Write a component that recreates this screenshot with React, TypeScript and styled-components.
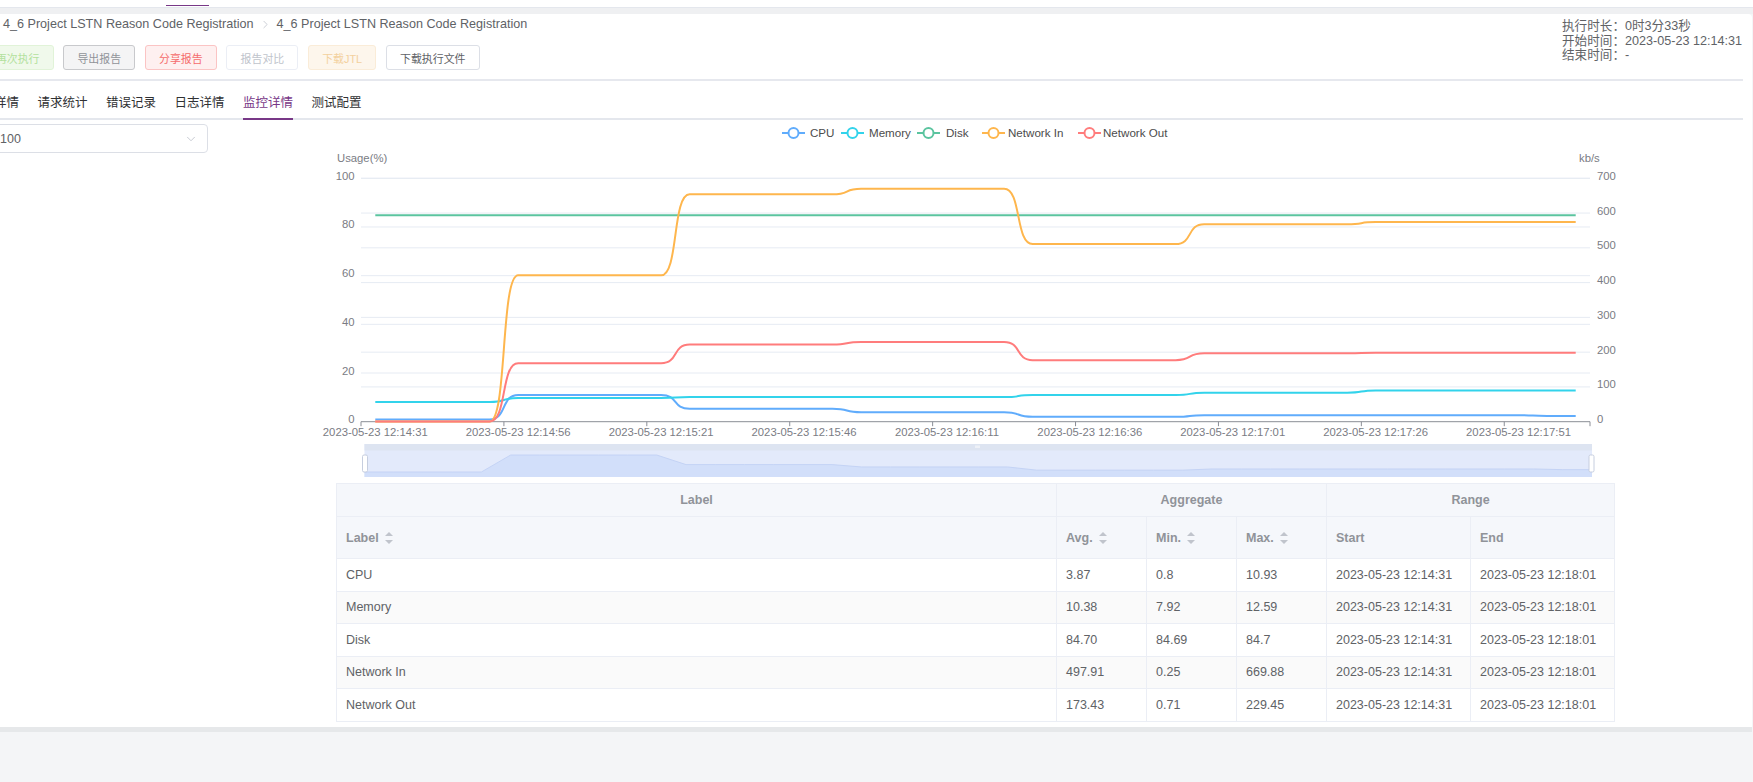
import React from 'react';
import styled, { createGlobalStyle } from 'styled-components';
import { ChevronDown, ChevronRight } from 'lucide-react';

const GlobalStyle = createGlobalStyle`
    html, body {
        margin: 0;
        padding: 0;
        height: 782px;
        overflow: hidden;
        background: #f4f5f7;
        font-family: "Liberation Sans", "Noto Sans CJK SC", sans-serif;
        color: #606266;
    }
`;

// chart geometry, in page pixels
const LEFT = 361;
const RIGHT = 1590;
const TOP = 178.3;
const BOTTOM = 421.7;
const COUNT = 43;
const BAND = (RIGHT - LEFT) / COUNT;
const pointX = (i: number) => LEFT + BAND / 2 + BAND * i;
const percentY = (v: number) => BOTTOM - (v / 100) * (BOTTOM - TOP);
const rateY = (v: number) => BOTTOM - (v / 700) * (BOTTOM - TOP);

// [first index, value] - the value holds until the next entry
const expand = (steps: number[][]) => {
    const out: number[] = [];
    for (let i = 0; i < COUNT; i++) {
        let v = steps[0][1];
        for (const s of steps) if (i >= s[0]) v = s[1];
        out.push(v);
    }
    return out;
};

const cpu = expand([[0, 0.9], [5, 11], [11, 5.3], [17, 3.9], [23, 2], [29, 2.7], [41, 2.3]]);
const memory = expand([[0, 8.1], [5, 9.7], [11, 10.1], [23, 10.95], [29, 11.9], [35, 12.85]]);
const disk = expand([[0, 84.8]]);
const netIn = expand([[0, 0.25], [5, 421], [11, 654], [17, 669.88], [23, 511], [29, 568], [35, 574]]);
const netOut = expand([[0, 0.71], [5, 168], [11, 222], [17, 229.45], [23, 177], [29, 197], [35, 198.5]]);

const smoothPath = (values: number[], toY: (v: number) => number) => {
    let d = `M${pointX(0)} ${toY(values[0])}`;
    for (let i = 1; i < values.length; i++) {
        const x0 = pointX(i - 1);
        const x1 = pointX(i);
        const h = (x1 - x0) * 0.62;
        d += ` C${x0 + h} ${toY(values[i - 1])} ${x1 - h} ${toY(values[i])} ${x1} ${toY(values[i])}`;
    }
    return d;
};

const SERIES = [
    { name: 'CPU', color: '#60acfc', values: cpu, toY: percentY, lx: 782, tx: 810 },
    { name: 'Memory', color: '#32d3eb', values: memory, toY: percentY, lx: 841, tx: 869 },
    { name: 'Disk', color: '#5bc49f', values: disk, toY: percentY, lx: 917, tx: 946 },
    { name: 'Network In', color: '#feb64d', values: netIn, toY: rateY, lx: 982, tx: 1008 },
    { name: 'Network Out', color: '#ff7c7c', values: netOut, toY: rateY, lx: 1078, tx: 1103 },
];

const X_LABELS = [
    '2023-05-23 12:14:31', '2023-05-23 12:14:56', '2023-05-23 12:15:21',
    '2023-05-23 12:15:46', '2023-05-23 12:16:11', '2023-05-23 12:16:36',
    '2023-05-23 12:17:01', '2023-05-23 12:17:26', '2023-05-23 12:17:51',
];

const SLIDER_LEFT = 364.5;
const SLIDER_RIGHT = 1592;
const sliderX = (i: number) => SLIDER_LEFT + ((SLIDER_RIGHT - SLIDER_LEFT) * i) / (COUNT - 1);
const sliderY = (v: number) => 472 - (v - 0.9) * 1.68;
const sliderLine = cpu.map((v, i) => `${sliderX(i)},${sliderY(v)}`).join(' ');

const BUTTONS = [
    { label: '再次执行', kind: 'success' },
    { label: '导出报告', kind: 'muted' },
    { label: '分享报告', kind: 'danger' },
    { label: '报告对比', kind: 'plain' },
    { label: '下载JTL', kind: 'warning' },
    { label: '下载执行文件', kind: 'default' },
];

const TABS = ['测试详情', '请求统计', '错误记录', '日志详情', '监控详情', '测试配置'];

const ROWS = [
    ['CPU', '3.87', '0.8', '10.93'],
    ['Memory', '10.38', '7.92', '12.59'],
    ['Disk', '84.70', '84.69', '84.7'],
    ['Network In', '497.91', '0.25', '669.88'],
    ['Network Out', '173.43', '0.71', '229.45'],
];

function MonitorChart() {
    const gridRight = [0, 100, 200, 300, 400, 500, 600, 700];
    const gridLeft = [0, 20, 40, 60, 80, 100];
    return (
        <ChartSvg viewBox="208 120 1545 364">
            {SERIES.map((s) => (
                <g key={s.name}>
                    <line x1={s.lx} x2={s.lx + 23} y1={133} y2={133} stroke={s.color} strokeWidth={2} />
                    <circle cx={s.lx + 11.5} cy={133} r={5} fill="#fff" stroke={s.color} strokeWidth={2} />
                    <LegendText x={s.tx} y={137}>{s.name}</LegendText>
                </g>
            ))}

            <AxisText x={337} y={161.5}>Usage(%)</AxisText>
            <AxisText x={1579} y={161.5}>kb/s</AxisText>

            {gridLeft.slice(1).map((v) => (
                <line key={v} x1={LEFT} x2={RIGHT} y1={percentY(v)} y2={percentY(v)} stroke="#e6ebf3" strokeWidth={1} />
            ))}
            {gridRight.slice(1).map((v) => (
                <line key={v} x1={LEFT} x2={RIGHT} y1={rateY(v)} y2={rateY(v)} stroke="#e6ebf3" strokeWidth={1} />
            ))}
            {gridLeft.map((v) => (
                <AxisText key={v} x={354.5} y={percentY(v) + 1.5} textAnchor="end">{v}</AxisText>
            ))}
            {gridRight.map((v) => (
                <AxisText key={v} x={1597} y={rateY(v) + 1.5}>{v}</AxisText>
            ))}

            <line x1={LEFT} x2={RIGHT} y1={BOTTOM} y2={BOTTOM} stroke="#8b8e96" strokeWidth={1} />
            {Array.from({ length: 10 }).map((_, i) => {
                const x = i === 9 ? RIGHT : LEFT + BAND * 5 * i;
                return <line key={i} x1={x} x2={x} y1={BOTTOM} y2={BOTTOM + 4.5} stroke="#8b8e96" strokeWidth={1} />;
            })}
            {X_LABELS.map((t, i) => (
                <AxisText key={t} x={pointX(5 * i)} y={435.5} textAnchor="middle">{t}</AxisText>
            ))}

            {SERIES.map((s) => (
                <path key={s.name} d={smoothPath(s.values, s.toY)} fill="none" stroke={s.color} strokeWidth={2} />
            ))}

            <rect x={SLIDER_LEFT} y={444} width={SLIDER_RIGHT - SLIDER_LEFT} height={33} fill="#e3eafb" />
            <rect x={SLIDER_LEFT} y={444} width={SLIDER_RIGHT - SLIDER_LEFT} height={6.5} fill="#dde4f1" />
            <polygon
                points={`${SLIDER_LEFT},477 ${sliderLine} ${SLIDER_RIGHT},477`}
                fill="#d2dffa"
            />
            <polyline points={sliderLine} fill="none" stroke="#c4d3f5" strokeWidth={1} />
            <rect x={975} y={445.5} width={5} height={2.5} fill="#eef1f7" />
            <SliderHandle x={362.5} y={455} width={5} height={17} rx={1.5} />
            <SliderHandle x={1589} y={455} width={5} height={17} rx={1.5} />
        </ChartSvg>
    );
}

function SortCaret() {
    return (
        <Caret>
            <CaretUp />
            <CaretDown />
        </Caret>
    );
}

export default function App() {
    return (
        <>
            <GlobalStyle />
            <TopNav>
                <NavMark />
            </TopNav>
            <Gutter />
            <Card>
                <Header>
                    <HeaderLeft>
                        <Breadcrumb>
                            <span>4_6 Project LSTN Reason Code Registration</span>
                            <ChevronRight size={13} color="#c0c4cc" strokeWidth={1.5} />
                            <span>4_6 Project LSTN Reason Code Registration</span>
                        </Breadcrumb>
                        <ButtonRow>
                            {BUTTONS.map((b) => (
                                <ActionButton key={b.label} $kind={b.kind}>{b.label}</ActionButton>
                            ))}
                        </ButtonRow>
                    </HeaderLeft>
                    <RunInfo>
                        <div>执行时长：0时3分33秒</div>
                        <div>开始时间：2023-05-23 12:14:31</div>
                        <div>结束时间：-</div>
                    </RunInfo>
                </Header>
                <Divider />
                <TabRow>
                    {TABS.map((t) => (
                        <Tab key={t} $active={t === '监控详情'}>{t}</Tab>
                    ))}
                </TabRow>
                <Body>
                    <SelectBox>
                        <span>100</span>
                        <ChevronDown size={14} color="#c0c4cc" strokeWidth={1.5} />
                    </SelectBox>
                    <ChartColumn>
                        <MonitorChart />
                        <DataTable>
                            <colgroup>
                                <col width={720} />
                                <col width={90} />
                                <col width={90} />
                                <col width={90} />
                                <col width={144} />
                                <col width={144} />
                            </colgroup>
                            <thead>
                                <tr>
                                    <GroupCell>Label</GroupCell>
                                    <GroupCell colSpan={3}>Aggregate</GroupCell>
                                    <GroupCell colSpan={2}>Range</GroupCell>
                                </tr>
                                <tr>
                                    <HeadCell>Label<SortCaret /></HeadCell>
                                    <HeadCell>Avg.<SortCaret /></HeadCell>
                                    <HeadCell>Min.<SortCaret /></HeadCell>
                                    <HeadCell>Max.<SortCaret /></HeadCell>
                                    <HeadCell>Start</HeadCell>
                                    <HeadCell>End</HeadCell>
                                </tr>
                            </thead>
                            <tbody>
                                {ROWS.map((r, i) => (
                                    <Row key={r[0]} $striped={i % 2 === 1}>
                                        {r.map((c, j) => <td key={j}>{c}</td>)}
                                        <td>2023-05-23 12:14:31</td>
                                        <td>2023-05-23 12:18:01</td>
                                    </Row>
                                ))}
                            </tbody>
                        </DataTable>
                    </ChartColumn>
                </Body>
            </Card>
        </>
    );
}

const TopNav = styled.div`
    height: 2px;
    padding: 5px 0 0 166px;
    background: #fff;
    border-bottom: 1px solid #e4e7ed;
`;
const NavMark = styled.div`
    width: 43px;
    height: 1px;
    background: #783887;
`;
const Gutter = styled.div`
    height: 6px;
    background: #eff0f2;
`;
const Card = styled.div`
    width: 1752px;
    background: #fff;
    border-bottom: 5px solid #e6e8ea;
    border-top-right-radius: 4px;
    padding-bottom: 5px;
    overflow: hidden;
`;
const Header = styled.div`
    display: flex;
    justify-content: space-between;
    padding-right: 10px;
`;
const HeaderLeft = styled.div`
    padding-top: 3px;
`;
const Breadcrumb = styled.div`
    display: flex;
    align-items: center;
    gap: 2.5px;
    height: 14px;
    padding-left: 3px;
    font-size: 12.6px;
    line-height: 14px;
    svg {
        margin: 0 2.5px;
    }
`;
const ButtonRow = styled.div`
    display: flex;
    gap: 9.4px;
    margin: 14px 0 9px -18.4px;
`;
const buttonColors: Record<string, string> = {
    success: 'background: #f0f9eb; border-color: #e1f3d8; color: #b3e19d;',
    muted: 'background: #f4f4f5; border-color: #c8c9cc; color: #909399;',
    danger: 'background: #fef0f0; border-color: #fbc4c4; color: #f56c6c;',
    plain: 'background: #fff; border-color: #ebeef5; color: #c0c4cc;',
    warning: 'background: #fdf6ec; border-color: #faecd8; color: #f3d19e;',
    default: 'background: #fff; border-color: #dcdfe6; color: #606266;',
};
const ActionButton = styled.button<{ $kind: string }>`
    height: 25px;
    padding: 0 13.3px;
    border: 1px solid;
    border-radius: 3px;
    font-family: inherit;
    font-size: 10.9px;
    ${(p) => buttonColors[p.$kind]}
`;
const RunInfo = styled.div`
    padding-top: 5px;
    width: 180px;
    font-size: 12.6px;
    line-height: 14.5px;
    white-space: nowrap;
`;
const Divider = styled.div`
    height: 2px;
    margin-right: 9px;
    background: #e6e8ee;
`;
const TabRow = styled.div`
    display: flex;
    gap: 18.5px;
    height: 39px;
    box-sizing: border-box;
    margin-left: -31px;
    margin-right: 9px;
    border-bottom: 2px solid #e4e7ed;
`;
const Tab = styled.div<{ $active?: boolean }>`
    height: 39px;
    box-sizing: border-box;
    padding-top: 14px;
    font-size: 12.5px;
    line-height: 16px;
    color: ${(p) => (p.$active ? '#783887' : '#303133')};
    border-bottom: 2px solid ${(p) => (p.$active ? '#783887' : 'transparent')};
`;
const Body = styled.div`
    display: grid;
    grid-template-columns: 208px 1fr;
`;
const SelectBox = styled.div`
    display: flex;
    align-items: center;
    justify-content: space-between;
    box-sizing: border-box;
    height: 29px;
    width: 228px;
    margin: 4px 0 0 -20px;
    padding: 0 9px 0 19px;
    border: 1px solid #dcdfe6;
    border-radius: 4px;
    font-size: 12.5px;
`;
const ChartColumn = styled.div`
    min-width: 0;
`;
const ChartSvg = styled.svg`
    display: block;
    width: 1545px;
    height: 364px;
    margin-bottom: -1px;
`;
const LegendText = styled.text`
    font-size: 11.6px;
    fill: #4c4c4c;
`;
const AxisText = styled.text`
    font-size: 11.3px;
    fill: #7a7c84;
`;
const SliderHandle = styled.rect`
    fill: #fff;
    stroke: #c6cedf;
    stroke-width: 1;
`;
const DataTable = styled.table`
    width: 1278px;
    margin-left: 128px;
    table-layout: fixed;
    border-collapse: separate;
    border-spacing: 0;
    border-top: 1px solid #ebeef5;
    border-left: 1px solid #ebeef5;
    font-size: 12.5px;
`;
const GroupCell = styled.th`
    height: 33px;
    box-sizing: border-box;
    padding: 0 9px;
    background: #f5f7fb;
    border-right: 1px solid #ebeef5;
    border-bottom: 1px solid #ebeef5;
    color: #909399;
    font-weight: bold;
    text-align: center;
`;
const HeadCell = styled.th`
    height: 42px;
    box-sizing: border-box;
    padding: 0 9px;
    background: #f5f7fb;
    border-right: 1px solid #ebeef5;
    border-bottom: 1px solid #ebeef5;
    color: #909399;
    font-weight: bold;
    text-align: left;
`;
const Caret = styled.span`
    display: inline-flex;
    flex-direction: column;
    gap: 4px;
    margin-left: 6px;
    vertical-align: middle;
`;
const CaretUp = styled.i`
    display: block;
    width: 0;
    height: 0;
    border-left: 4px solid transparent;
    border-right: 4px solid transparent;
    border-bottom: 4px solid #c0c4cc;
`;
const CaretDown = styled.i`
    display: block;
    width: 0;
    height: 0;
    border-left: 4px solid transparent;
    border-right: 4px solid transparent;
    border-top: 4px solid #c0c4cc;
`;
const Row = styled.tr<{ $striped?: boolean }>`
    background: ${(p) => (p.$striped ? '#fafafa' : '#fff')};
    td {
        height: ${(p) => (p.$striped ? '32px' : '33px')};
        box-sizing: border-box;
        padding: 0 9px 1px;
        border-right: 1px solid #ebeef5;
        border-bottom: 1px solid #ebeef5;
        color: #606266;
        white-space: nowrap;
    }
`;
